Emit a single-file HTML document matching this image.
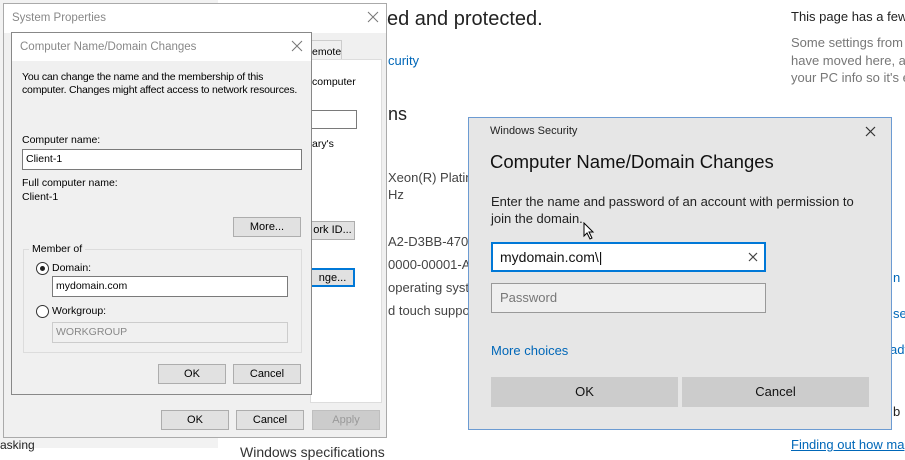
<!DOCTYPE html>
<html><head><meta charset="utf-8"><style>
*{box-sizing:border-box;margin:0;padding:0}
body{width:905px;height:448px;position:relative;overflow:hidden;background:#fff;font-family:"Liberation Sans",sans-serif;color:#222}
.a{position:absolute;white-space:nowrap}
.btn{position:absolute;background:#e1e1e1;border:1px solid #adadad;font-size:11px;text-align:center;color:#000}
.inp{position:absolute;background:#fff;border:1px solid #7a7a7a;font-size:10.5px;padding-left:3px;color:#000}
.s{font-size:10.5px;color:#000}
.bg{font-size:13px;color:#444}
</style></head><body>
<div class="a" style="left:0;top:0;width:218px;height:448px;background:#f2f2f2"></div>
<div class="a" style="left:0;top:438px;font-size:12px;color:#222">asking</div>
<div class="a" style="left:240px;top:444px;font-size:14px;color:#333">Windows specifications</div>

<!-- background settings text -->
<div class="a" style="left:387px;top:8px;font-size:20px;color:#222">ed and protected.</div>
<div class="a" style="left:388px;top:53px;font-size:13px;color:#0067b8">curity</div>
<div class="a" style="left:388px;top:104px;font-size:18px;color:#222">ns</div>
<div class="a bg" style="left:388px;top:170px">Xeon(R) Platin</div>
<div class="a bg" style="left:388px;top:187px">Hz</div>
<div class="a bg" style="left:388px;top:234px">A2-D3BB-4700</div>
<div class="a bg" style="left:388px;top:257px">0000-00001-A</div>
<div class="a bg" style="left:388px;top:280px">operating syst</div>
<div class="a bg" style="left:388px;top:303px">d touch suppo</div>
<div class="a" style="left:791px;top:9px;font-size:13px;color:#222">This page has a few</div>
<div class="a" style="left:791px;top:34px;font-size:13px;color:#777;line-height:17.5px">Some settings from<br>have moved here, a<br>your PC info so it's e</div>
<div class="a" style="left:893px;top:270px;font-size:13px;color:#0067b8">n</div>
<div class="a" style="left:893px;top:306px;font-size:13px;color:#0067b8">se</div>
<div class="a" style="left:890px;top:342px;font-size:13px;color:#0067b8">adv</div>
<div class="a" style="left:893px;top:404px;font-size:13px;color:#222">b</div>
<div class="a" style="left:791px;top:437px;font-size:13px;color:#0067b8;text-decoration:underline">Finding out how ma</div>

<!-- System Properties -->
<div class="a" style="left:3px;top:3px;width:384px;height:435px;background:#f0f0f0;border:1px solid #aaa">
  <div class="a" style="left:0;top:0;width:382px;height:29px;background:#fff"></div>
  <div class="a" style="left:8px;top:8px;font-size:11.5px;color:#888">System Properties</div>
  <svg class="a" style="left:363px;top:7px" width="12" height="12"><path d="M1 1L11 11M11 1L1 11" stroke="#777" stroke-width="1"/></svg>
  <div class="a" style="left:306px;top:36px;width:32px;height:20px;border:1px solid #ccc;border-bottom:none;background:#f0f0f0"></div>
  <div class="a s" style="left:308px;top:42px">emote</div>
  <div class="a" style="left:306px;top:55px;width:72px;height:344px;background:#fff;border:1px solid #ddd"></div>
  <div class="a s" style="left:308px;top:72px">computer</div>
  <div class="a" style="left:306px;top:106px;width:47px;height:19px;border:1px solid #7a7a7a;background:#fff"></div>
  <div class="a s" style="left:308px;top:134px">ary's</div>
  <div class="btn" style="left:306px;top:217px;width:45px;height:19px;line-height:17px">ork ID...</div>
  <div class="btn" style="left:306px;top:264px;width:45px;height:19px;line-height:16px;border:2px solid #0078d7">nge...</div>
  <div class="btn" style="left:157px;top:406px;width:68px;height:20px;line-height:18px">OK</div>
  <div class="btn" style="left:232px;top:406px;width:68px;height:20px;line-height:18px">Cancel</div>
  <div class="btn" style="left:308px;top:406px;width:68px;height:20px;line-height:18px;color:#999;background:#ccc;border-color:#bfbfbf">Apply</div>
</div>

<!-- Computer Name/Domain Changes -->
<div class="a" style="left:11px;top:32px;width:301px;height:363px;background:#f0f0f0;border:1px solid #888">
  <div class="a" style="left:0;top:0;width:299px;height:28px;background:#fff"></div>
  <div class="a" style="left:8px;top:8px;font-size:11.5px;color:#888">Computer Name/Domain Changes</div>
  <svg class="a" style="left:279px;top:7px" width="12" height="12"><path d="M1 1L11 11M11 1L1 11" stroke="#777" stroke-width="1"/></svg>
  <div class="a s" style="left:10px;top:38px;line-height:12.5px;letter-spacing:-0.2px">You can change the name and the membership of this<br>computer. Changes might affect access to network resources.</div>
  <div class="a s" style="left:10px;top:101px">Computer name:</div>
  <div class="inp" style="left:10px;top:116px;width:280px;height:21px;line-height:19px">Client-1</div>
  <div class="a s" style="left:10px;top:144px">Full computer name:</div>
  <div class="a s" style="left:10px;top:158px">Client-1</div>
  <div class="btn" style="left:221px;top:184px;width:68px;height:20px;line-height:18px">More...</div>
  <div class="a" style="left:11px;top:216px;width:279px;height:104px;border:1px solid #dcdcdc"></div>
  <div class="a s" style="left:17px;top:210px;background:#f0f0f0;padding:0 3px">Member of</div>
  <div class="a" style="left:24px;top:229px;width:13px;height:13px;border-radius:50%;border:1px solid #333;background:#fff"><div class="a" style="left:3px;top:3px;width:5px;height:5px;border-radius:50%;background:#222"></div></div>
  <div class="a s" style="left:40px;top:229px">Domain:</div>
  <div class="inp" style="left:40px;top:243px;width:236px;height:21px;line-height:19px">mydomain.com</div>
  <div class="a" style="left:24px;top:272px;width:13px;height:13px;border-radius:50%;border:1px solid #333;background:#fff"></div>
  <div class="a s" style="left:40px;top:272px">Workgroup:</div>
  <div class="inp" style="left:40px;top:289px;width:236px;height:21px;line-height:19px;background:#f0f0f0;border-color:#ccc;color:#888">WORKGROUP</div>
  <div class="btn" style="left:146px;top:331px;width:68px;height:20px;line-height:18px">OK</div>
  <div class="btn" style="left:221px;top:331px;width:68px;height:20px;line-height:18px">Cancel</div>
</div>

<!-- Windows Security -->
<div class="a" style="left:468px;top:117px;width:424px;height:313px;background:#e6e6e6;border:1px solid #6c9bd2">
  <div class="a" style="left:21px;top:7px;font-size:11px;color:#222">Windows Security</div>
  <svg class="a" style="left:396px;top:8px" width="11" height="11"><path d="M1 1L10 10M10 1L1 10" stroke="#333" stroke-width="1.2"/></svg>
  <div class="a" style="left:21px;top:33px;font-size:18.5px;color:#111">Computer Name/Domain Changes</div>
  <div class="a" style="left:22px;top:75px;font-size:13px;color:#222;line-height:17px">Enter the name and password of an account with permission to<br>join the domain.</div>
  <div class="a" style="left:22px;top:124px;width:275px;height:30px;background:#fff;border:2px solid #0078d7;font-size:14px;line-height:26px;padding-left:7px;color:#111">mydomain.com\|</div>
  <svg class="a" style="left:279px;top:134px" width="10" height="10"><path d="M1 1L9 9M9 1L1 9" stroke="#444" stroke-width="1.2"/></svg>
  <div class="a" style="left:22px;top:165px;width:275px;height:30px;background:#efefef;border:1px solid #999;font-size:13px;line-height:28px;padding-left:8px;color:#777">Password</div>
  <div class="a" style="left:22px;top:225px;font-size:13px;color:#0067b8">More choices</div>
  <div class="a" style="left:22px;top:259px;width:187px;height:30px;background:#ccc;font-size:13px;line-height:30px;text-align:center;color:#111">OK</div>
  <div class="a" style="left:213px;top:259px;width:187px;height:30px;background:#ccc;font-size:13px;line-height:30px;text-align:center;color:#111">Cancel</div>
</div>
<svg class="a" style="left:583px;top:222px" width="12" height="18" viewBox="0 0 12 18"><path d="M1 1 L1 14 L4 11 L7 17 L9 16 L6 10 L10 10 Z" fill="#fff" stroke="#000" stroke-width="1"/></svg>
</body></html>
